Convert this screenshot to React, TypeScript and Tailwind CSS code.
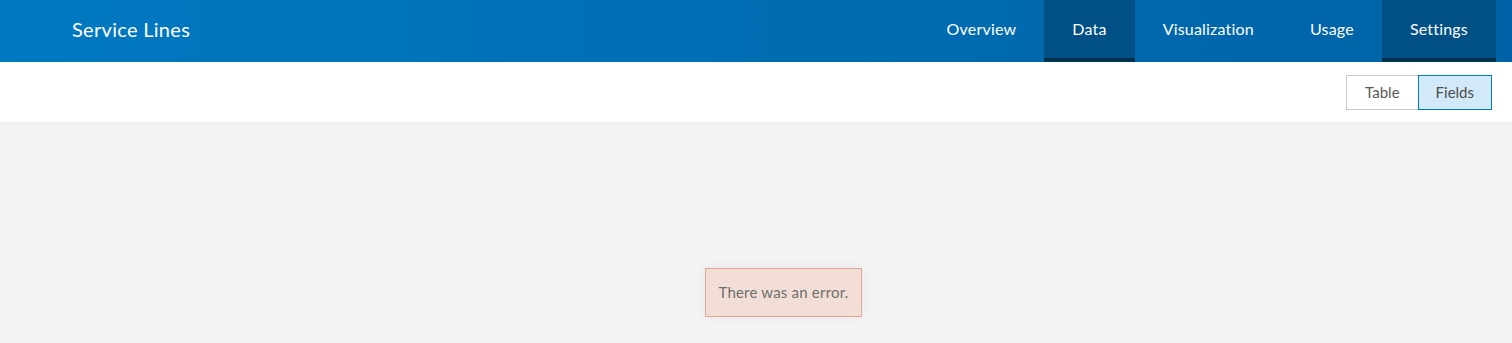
import React from 'react'

const tabs = [
  { label: 'Overview', active: false },
  { label: 'Data', active: true },
  { label: 'Visualization', active: false },
  { label: 'Usage', active: false },
  { label: 'Settings', active: true },
]

export default function App() {
  return (
    <div className="min-h-[343px] flex flex-col bg-[#f3f3f3] font-['Lato','Noto_Sans',sans-serif]">
      <header className="h-[62px] flex items-stretch bg-gradient-to-r from-[#0079c1] to-[#0062a6] text-white">
        <h1 className="flex items-center pl-[72px] pb-1 text-[20px] tracking-[0.3px]">Service Lines</h1>
        <nav className="ml-auto mr-4 flex items-stretch">
          {tabs.map((t) => (
            <a
              key={t.label}
              className={
                t.active
                  ? 'flex items-center px-7 text-[16px] tracking-[0.2px] bg-[#005085] border-b-4 border-[#00324f]'
                  : 'flex items-center px-7 text-[16px] tracking-[0.2px] border-b-4 border-transparent'
              }
            >
              {t.label}
            </a>
          ))}
        </nav>
      </header>

      <div className="h-[61px] bg-white flex items-center justify-end pr-5 border-b border-[#ececec]">
        <div className="flex h-[35px] text-[15px]">
          <button className="px-[18px] border border-[#cacaca] border-r-0 bg-white text-[#595959]">Table</button>
          <button className="px-[17px] border border-[#0079c1] bg-[#d2e9f9] text-[#4c4c4c]">Fields</button>
        </div>
      </div>

      <main className="flex-1 flex items-start justify-center pt-[145px] pl-[55px]">
        <div className="px-[12px] h-[49px] flex items-center bg-[#f3ded7] border border-[#e4a793] text-[15px] text-[#6e6e6e] tracking-[0.2px] shadow-[0_0_12px_rgba(0,0,0,0.05)]">
          There was an error.
        </div>
      </main>
    </div>
  )
}
